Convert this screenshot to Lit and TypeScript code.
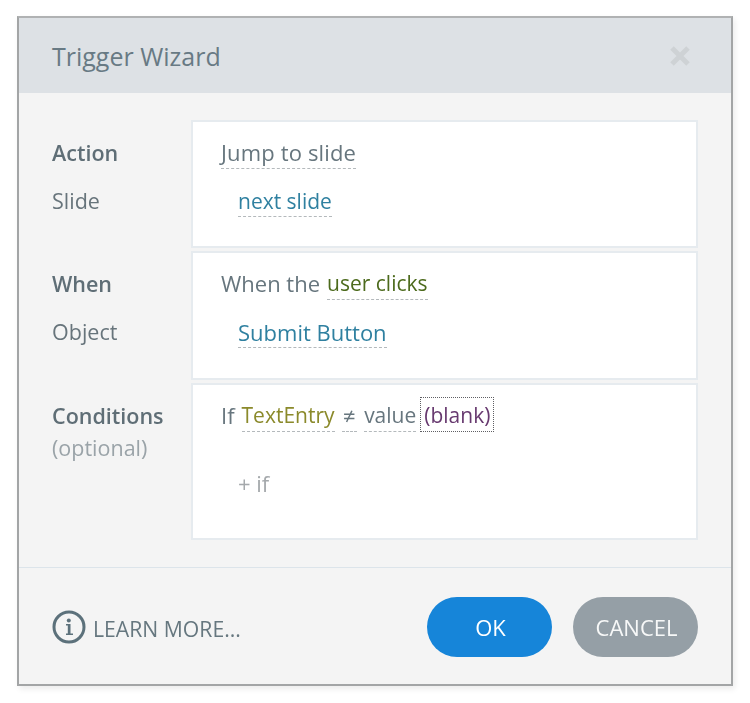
import { LitElement, html, css } from "lit";
import { customElement } from "lit/decorators.js";

@customElement("app-root")
export class AppRoot extends LitElement {
  static styles = css`
    :host { display: block; width: 750px; height: 703px; background: #fff; font-family: "Open Sans", "Noto Sans", sans-serif; box-sizing: border-box; padding: 16px 16px 0 17px; }
    .dialog { width: 716px; height: 670px; box-sizing: border-box; border: 2px solid #a3a5a6; border-top-color: #b0b2b3; background: #f4f4f4; box-shadow: 2px 3px 6px rgba(0,0,0,.08); display: flex; flex-direction: column; filter: blur(.35px); }
    .head { height: 75px; flex: none; background: #dde1e5; display: flex; align-items: center; justify-content: space-between; padding: 0 40px 0 33px; box-sizing: border-box; }
    .title { font-size: 25px; color: #687a84; }
    .close { width: 22px; height: 22px; display: block; }
    .body { flex: none; height: 475px; box-sizing: border-box; padding: 27px 33px 0 33px; display: flex; flex-direction: column; gap: 3px; border-bottom: 1px solid #dce4ea; }
    .row { display: flex; }
    .labels { width: 139px; flex: none; padding-top: 17px; font-size: 21.5px; line-height: 32px; color: #67747b; display: flex; flex-direction: column; gap: 16px; }
    .labels b { font-weight: 600; color: #5f6e76; }
    .labels.tight { gap: 0; }
    .muted { color: #9aa3a8; }
    .panel { flex: 1; box-sizing: border-box; background: #fff; border: 2px solid #e6ebef; padding: 17px 28px 0 28px; font-size: 22px; color: #67767e; }
    .p1 { height: 128px; } .p2 { height: 129px; } .p3 { height: 157px; }
    .line { height: 32px; line-height: 27px; white-space: nowrap; display: flex; align-items: flex-start; gap: 7px; }
    .sub { margin-top: 16px; padding-left: 17px; line-height: 29px; }
    .d { border-bottom: 1.5px dashed #b4b9bc; height: 29px; display: block; }
    .small { font-size: 21px; }
    .spaced { letter-spacing: .15px; }
    .neq { padding: 0 1.5px; }
    .blue { color: #2f80a0; }
    .green { color: #4c6a1c; }
    .olive { color: #8b8a2b; }
    .purple { color: #67396f; font-size: 21px; border: 1.5px dotted #5f5f63; height: 35px; padding: 3.5px 3px 0; margin: -5px 0 0 -3px; box-sizing: border-box; display: block; }
    .add { margin-top: 36px; padding-left: 17px; color: #a5a9ac; }
    .foot { flex: 1; display: flex; align-items: center; justify-content: space-between; padding: 2px 33px 0; box-sizing: border-box; }
    .learn { display: flex; align-items: center; gap: 7px; color: #66777f; font-size: 21.2px; }
    .learn span { padding-top: 2px; }
    .info { width: 34px; height: 34px; display: block; }
    .btns { display: flex; gap: 21px; }
    .btn { width: 125px; height: 60px; border-radius: 30px; color: #fff; font-size: 22px; box-sizing: border-box; padding-left: 2px; display: flex; align-items: center; justify-content: center; }
    .ok { background: #1685d9; }
    .cancel { background: #959fa6; color: #f7f8f8; }
  `;

  render() {
    return html`
      <div class="dialog">
        <div class="head">
          <div class="title">Trigger Wizard</div>
          <svg class="close" viewBox="0 0 22 22"><path d="M3 3 19 19M19 3 3 19" stroke="#ced2d5" stroke-width="5" fill="none"/></svg>
        </div>
        <div class="body">
          <div class="row">
            <div class="labels"><b>Action</b><span>Slide</span></div>
            <div class="panel p1">
              <div class="line"><span class="d spaced">Jump to slide</span></div>
              <div class="line sub"><span class="d blue small">next slide</span></div>
            </div>
          </div>
          <div class="row">
            <div class="labels"><b>When</b><span>Object</span></div>
            <div class="panel p2">
              <div class="line"><span>When the</span><span class="d green small">user clicks</span></div>
              <div class="line sub"><span class="d blue">Submit Button</span></div>
            </div>
          </div>
          <div class="row">
            <div class="labels tight"><b>Conditions</b><span class="muted">(optional)</span></div>
            <div class="panel p3">
              <div class="line"><span>If</span><span class="d olive small">TextEntry</span><span class="d neq">≠</span><span class="d small">value</span><span class="purple">(blank)</span></div>
              <div class="line add">+ if</div>
            </div>
          </div>
        </div>
        <div class="foot">
          <div class="learn">
            <svg class="info" viewBox="0 0 34 34"><circle cx="17" cy="17" r="15" fill="none" stroke="#5c717b" stroke-width="3"/><path d="M14 14h4.500v9.500H21V25h-7v-1.500h1.800V15.500H14z" fill="#5c717b"/><circle cx="16.800" cy="10.500" r="2" fill="#5c717b"/></svg>
            <span>LEARN MORE...</span>
          </div>
          <div class="btns">
            <div class="btn ok">OK</div>
            <div class="btn cancel">CANCEL</div>
          </div>
        </div>
      </div>
    `;
  }
}
